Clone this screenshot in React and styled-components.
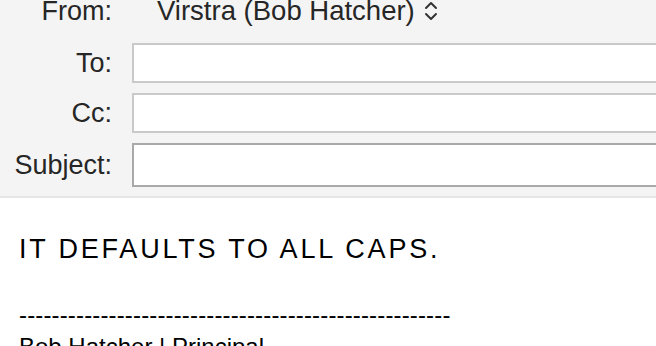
import React from "react";
import styled, { createGlobalStyle } from "styled-components";

const Global = createGlobalStyle`
  html, body {
    margin: 0;
    padding: 0;
    background: #ffffff;
    overflow: hidden;
  }
`;

const Window = styled.div`
  width: 656px;
  height: 346px;
  overflow: hidden;
  font-family: "Liberation Sans", Arial, sans-serif;
`;

const Header = styled.div`
  display: flex;
  flex-direction: column;
  gap: 10px;
  background: #f4f4f4;
  border-bottom: 2px solid #e6e6e6;
  padding: 0 0 12px 0;
  height: 198px;
  box-sizing: border-box;
`;

const Row = styled.div`
  display: grid;
  grid-template-columns: 112px 1fr;
  column-gap: ${(p) => (p.$plain ? "45px" : "20px")};
  align-items: center;
  height: ${(p) => (p.$plain ? "22px" : "auto")};
  margin-top: ${(p) => (p.$plain ? "-4px" : "0")};
  margin-bottom: ${(p) => (p.$plain ? "15px" : "0")};
`;

const Label = styled.div`
  text-align: right;
  font-size: 27px;
  line-height: 30px;
  color: #262626;
  white-space: nowrap;
`;

const Field = styled.div`
  height: ${(p) => (p.$focus ? "44px" : "40px")};
  width: 540px;
  box-sizing: border-box;
  background: #ffffff;
  border: 2px solid ${(p) => (p.$focus ? "#a9a9a9" : "#c9c9c9")};
`;

const Sender = styled.div`
  display: flex;
  align-items: center;
  gap: 8px;
  font-size: 27.5px;
  line-height: 30px;
  color: #262626;
  white-space: nowrap;
`;

const Body = styled.div`
  padding: 36px 19px 0;
  color: #000000;
`;

const Shout = styled.div`
  font-size: 27px;
  letter-spacing: 2.8px;
  line-height: 30px;
`;

const Rule = styled.div`
  margin-top: 39px;
  font-size: 24px;
  line-height: 24px;
  letter-spacing: 0.15px;
`;

const Signature = styled.div`
  margin-top: 6px;
  font-size: 24px;
  line-height: 28px;
`;

const Chevrons = () => (
  <svg width="16" height="22" viewBox="0 0 16 22" fill="none" stroke="#333" strokeWidth="2" strokeLinecap="round" strokeLinejoin="round">
    <path d="M3 8 L8 3 L13 8" />
    <path d="M3 14 L8 19 L13 14" />
  </svg>
);

export default function App() {
  return (
    <Window>
      <Global />
      <Header>
        <Row $plain>
          <Label>From:</Label>
          <Sender>
            Virstra (Bob Hatcher)
            <Chevrons />
          </Sender>
        </Row>
        <Row>
          <Label>To:</Label>
          <Field />
        </Row>
        <Row>
          <Label>Cc:</Label>
          <Field />
        </Row>
        <Row>
          <Label>Subject:</Label>
          <Field $focus />
        </Row>
      </Header>
      <Body>
        <Shout>IT DEFAULTS TO ALL CAPS.</Shout>
        <Rule>-----------------------------------------------------</Rule>
        <Signature>Bob Hatcher | Principal</Signature>
      </Body>
    </Window>
  );
}
